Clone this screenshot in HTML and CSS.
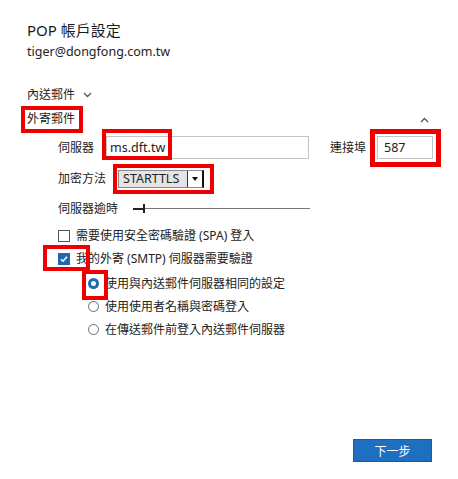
FILE: index.html
```html
<!DOCTYPE html>
<html lang="zh-Hant">
  <head>
    <meta charset="UTF-8" />
    <meta name="viewport" content="width=device-width, initial-scale=1.0" />
    <title>POP 帳戶設定</title>
    <link rel="stylesheet" href="styles.css">
  </head>
  <body>
    <div class="dialog">
      <h1 class="dialog-title">POP 帳戶設定</h1>
      <p class="account">tiger@dongfong.com.tw</p>

      <!-- Incoming mail (collapsed) -->
      <div class="section-toggle">
        <span>內送郵件</span>
        <svg class="chevron" width="9" height="6" viewBox="0 0 9 6"><path d="M1 1l3.5 3.5L8 1" /></svg>
      </div>

      <!-- Outgoing mail (expanded) -->
      <div class="section-head">
        <span>外寄郵件</span>
        <svg class="chevron" width="9" height="6" viewBox="0 0 9 6"><path d="M1 5l3.5-3.5L8 5" /></svg>
      </div>
      <div class="section-body">
        <div class="field-row server-row">
          <label class="field-label">伺服器</label>
          <input class="text-input server-input" type="text" value="ms.dft.tw" readonly>
          <label class="field-label port-label">連接埠</label>
          <input class="text-input port-input" type="text" value="587" readonly>
        </div>
        <div class="field-row enc-row">
          <label class="field-label">加密方法</label>
          <div class="select">
            <span class="select-value">STARTTLS</span>
            <span class="select-arrow"></span>
          </div>
        </div>
        <div class="field-row timeout-row">
          <label class="field-label">伺服器逾時</label>
          <div class="slider">
            <span class="slider-fill"></span>
            <span class="slider-thumb"></span>
          </div>
        </div>
        <ul class="options">
          <li><span class="checkbox"></span>需要使用安全密碼驗證 (SPA) 登入</li>
          <li>
            <span class="checkbox checked">
              <svg width="10" height="10" viewBox="0 0 10 10"><path d="M2 5.2l2 2 4-4.4" /></svg>
            </span>我的外寄 (SMTP) 伺服器需要驗證
          </li>
        </ul>
        <ul class="options sub-options">
          <li><span class="radio checked"></span>使用與內送郵件伺服器相同的設定</li>
          <li><span class="radio"></span>使用使用者名稱與密碼登入</li>
          <li><span class="radio"></span>在傳送郵件前登入內送郵件伺服器</li>
        </ul>
      </div>

      <div class="dialog-footer">
        <button class="btn-primary">下一步</button>
      </div>

      <!-- Highlight marks drawn over the form -->
      <span class="mark mark-outgoing"></span>
      <span class="mark mark-server"></span>
      <span class="mark mark-port"></span>
      <span class="mark mark-enc"></span>
      <span class="mark mark-smtp"></span>
      <span class="mark mark-radio"></span>
    </div>
  </body>
</html>
```

FILE: styles.css
```css
/* Global */
* {
  box-sizing: border-box;
}
body {
  margin: 0;
  font-family: "Noto Sans", "Noto Sans CJK TC", sans-serif;
  font-size: 12px;
  color: #222;
  background: #fff;
}

/* Dialog frame */
.dialog {
  position: relative;
  display: flex;
  flex-direction: column;
  height: 100vh;
  padding: 20px 24px 17px 27px;
}
.dialog-title {
  margin: 0;
  font-size: 15px;
  font-weight: normal;
  line-height: 20px;
  color: #1a1a1a;
}
.account {
  margin: 3px 0 0;
  font-size: 12.5px;
  line-height: 18px;
}

/* Section headers */
.section-toggle,
.section-head {
  display: flex;
  align-items: center;
  height: 20px;
  line-height: 20px;
}
.section-toggle {
  margin-top: 24px;
  gap: 8px;
}
.section-head {
  margin-top: 4px;
  justify-content: space-between;
}
.chevron path {
  fill: none;
  stroke: #555;
  stroke-width: 1.3;
}
.section-head .chevron {
  margin-right: 5px;
  margin-top: 2px;
}

/* Form rows */
.section-body {
  padding-left: 31px;
}
.field-row {
  display: flex;
  align-items: center;
}
.field-row > * {
  flex-shrink: 0;
}
.field-label {
  line-height: 16px;
  white-space: nowrap;
}
.server-row {
  margin-top: 7px;
  height: 23px;
}
.text-input {
  height: 23px;
  border: 1px solid #c4c4c4;
  font: inherit;
  font-size: 12.5px;
  color: #222;
  outline: none;
}
.server-input {
  width: 203px;
  margin-left: 12px;
  padding: 0 3px;
}
.port-label {
  margin-left: 21px;
}
.port-input {
  width: 56px;
  margin-left: 11px;
  padding: 0 6px;
}

/* Encryption dropdown */
.enc-row {
  margin-top: 11px;
  height: 18px;
}
.select {
  display: flex;
  height: 18px;
  margin-left: 12px;
  border: 1px solid #8a8a8a;
  border-right: 2px solid #111;
}
.select-value {
  width: 68px;
  padding-left: 4px;
  background: #e4e4e4;
  font-size: 12.5px;
  line-height: 16px;
}
.select-arrow {
  position: relative;
  width: 15px;
  background: #fff;
  border-left: 1px solid #333;
}
.select-arrow::after {
  content: "";
  position: absolute;
  left: 4px;
  top: 6px;
  border-left: 3px solid transparent;
  border-right: 3px solid transparent;
  border-top: 4px solid #111;
}

/* Timeout slider */
.timeout-row {
  margin-top: 11px;
  height: 20px;
}
.slider {
  position: relative;
  width: 177px;
  height: 9px;
  margin-left: 15px;
  margin-top: -2px;
}
.slider::before {
  content: "";
  position: absolute;
  left: 0;
  right: 0;
  top: 4px;
  height: 1px;
  background: #777;
}
.slider-fill {
  position: absolute;
  left: 0;
  top: 4px;
  width: 10px;
  height: 2px;
  background: #222;
}
.slider-thumb {
  position: absolute;
  left: 10px;
  top: 0;
  width: 2px;
  height: 9px;
  background: #222;
}

/* Checkbox and radio lists */
.options {
  list-style: none;
  margin: 5px 0 0;
  padding: 0;
}
.options li {
  display: flex;
  align-items: center;
  height: 23px;
  line-height: 16px;
}
.sub-options {
  margin-top: 2px;
  padding-left: 30px;
}
.checkbox {
  display: flex;
  align-items: center;
  justify-content: center;
  width: 12px;
  height: 12px;
  margin-right: 6px;
  border: 1px solid #555;
  background: #fff;
}
.checkbox.checked {
  background: #2068b0;
  border-color: #2068b0;
}
.checkbox svg path {
  fill: none;
  stroke: #fff;
  stroke-width: 1.5;
}
.radio {
  width: 11px;
  height: 11px;
  margin-right: 6px;
  border: 1px solid #6a6a6a;
  border-radius: 50%;
  background: #fff;
}
.radio.checked {
  border: 3px solid #2068b0;
}

/* Footer */
.dialog-footer {
  margin-top: auto;
  display: flex;
  justify-content: flex-end;
}
.btn-primary {
  width: 79px;
  height: 23px;
  margin-right: 2px;
  border: 1px solid #1b5b98;
  background: #1f6fc0;
  color: #fff;
  font: inherit;
  font-size: 12px;
}

/* Red highlight marks */
.mark {
  position: absolute;
  border: 4px solid #ee0000;
}
.mark-outgoing {
  left: 21px;
  top: 106px;
  width: 62px;
  height: 27px;
}
.mark-server {
  left: 102px;
  top: 129px;
  width: 70px;
  height: 31px;
}
.mark-port {
  left: 370px;
  top: 129px;
  width: 71px;
  height: 38px;
  border-width: 5px;
}
.mark-enc {
  left: 113px;
  top: 164px;
  width: 101px;
  height: 30px;
}
.mark-smtp {
  left: 43px;
  top: 245px;
  width: 47px;
  height: 26px;
}
.mark-radio {
  left: 82px;
  top: 270px;
  width: 26px;
  height: 30px;
}
```
